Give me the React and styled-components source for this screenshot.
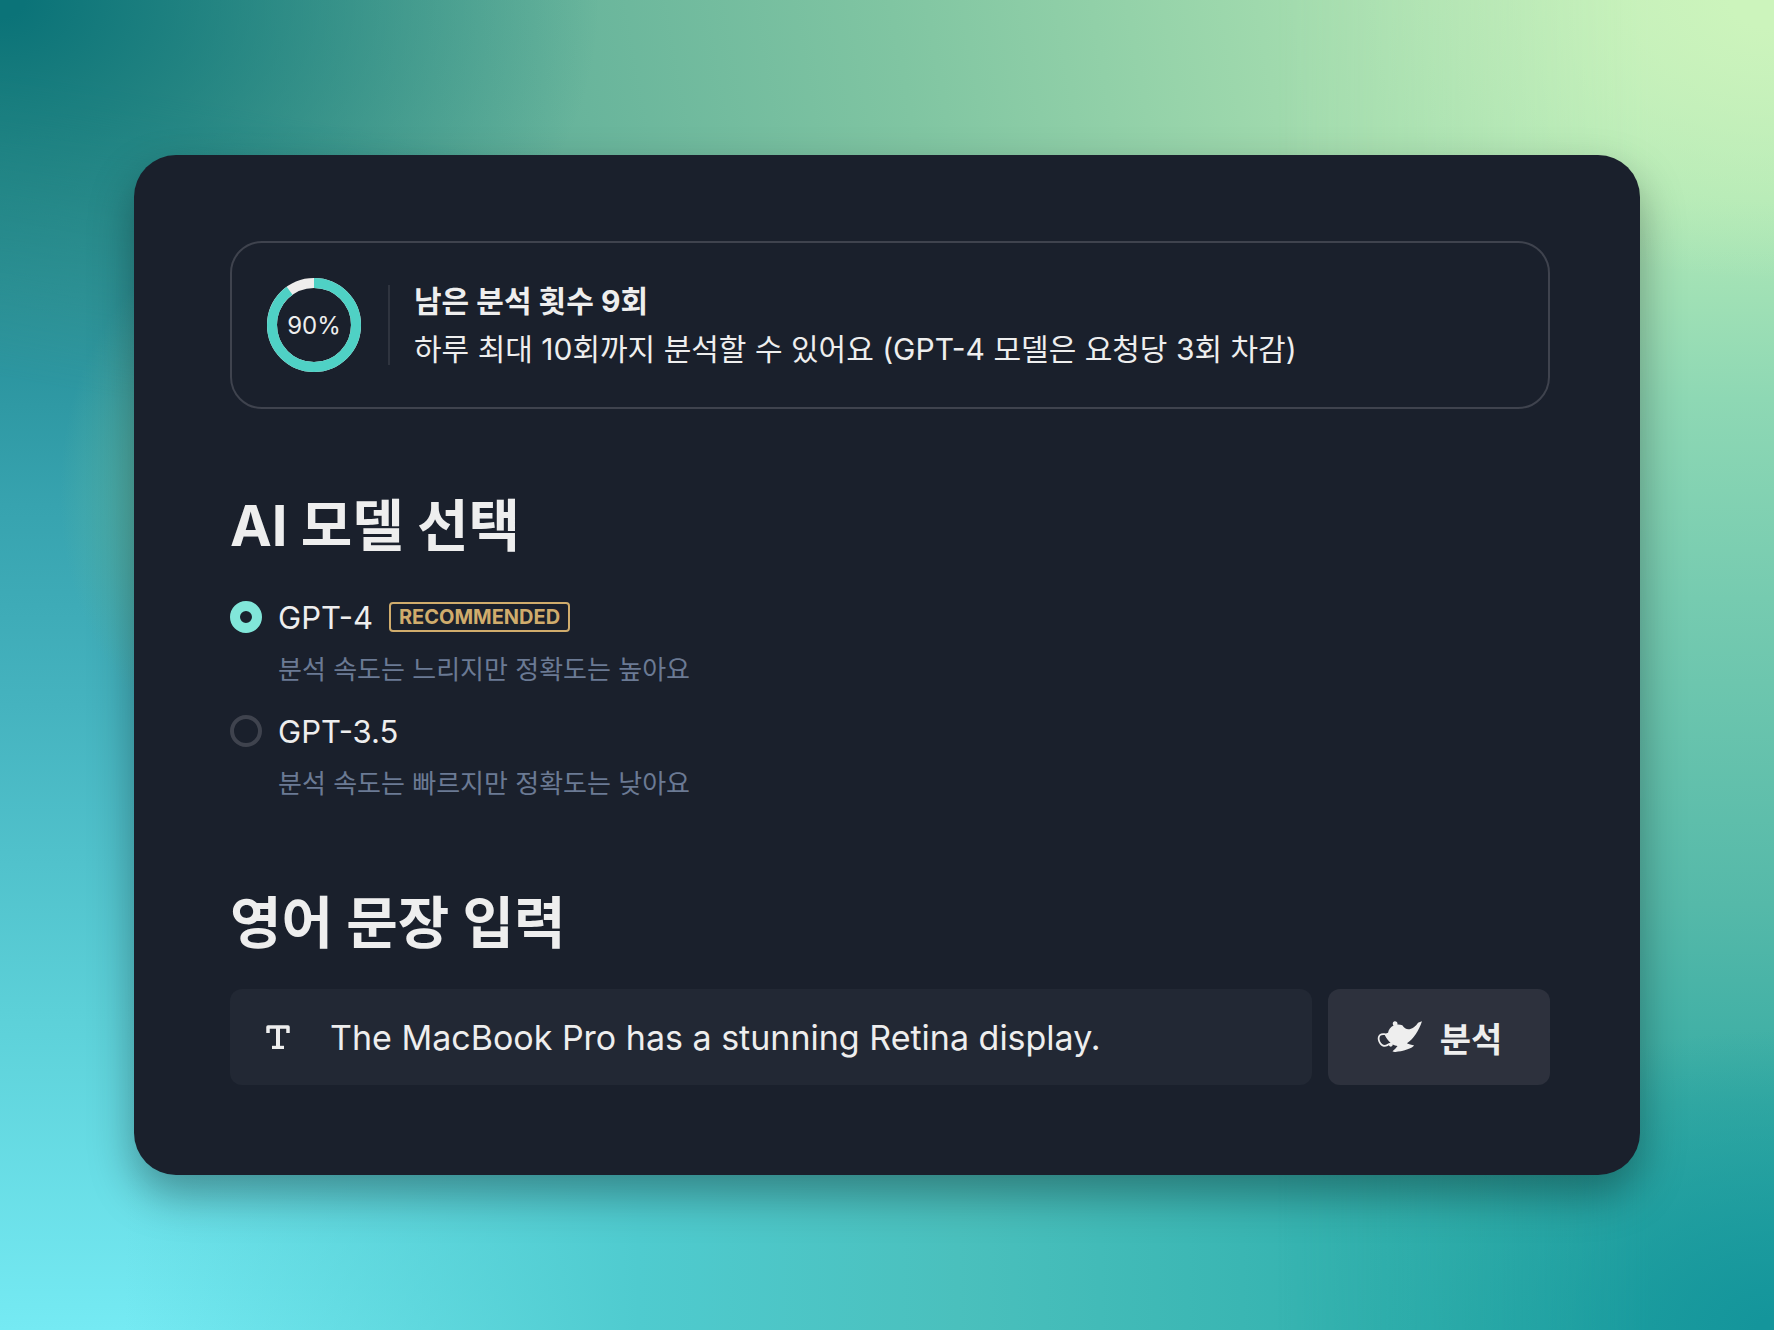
import React, { useState } from 'react'
import styled, { createGlobalStyle } from 'styled-components'
import { GiMagicLamp } from 'react-icons/gi'

const MAX_COUNT = 10

const MODELS = [
  { id: 'gpt-4', name: 'GPT-4', desc: '분석 속도는 느리지만 정확도는 높아요', recommended: true },
  { id: 'gpt-3.5', name: 'GPT-3.5', desc: '분석 속도는 빠르지만 정확도는 낮아요' },
]

function CountRing({ value }) {
  const radius = 42
  const length = 2 * Math.PI * radius

  return (
    <Ring>
      <svg viewBox="0 0 94 94" width="94" height="94" fill="none" strokeWidth="10" aria-hidden="true">
        <circle cx="47" cy="47" r={radius} stroke="#efedec" />
        <circle
          cx="47"
          cy="47"
          r={radius}
          stroke="#4fd1c5"
          strokeDasharray={`${(length * value) / 100} ${length}`}
          transform="rotate(-90 47 47)"
        />
      </svg>
      <RingText>{value}%</RingText>
    </Ring>
  )
}

function TypeIcon() {
  return (
    <svg viewBox="0 0 24 24" width="24" height="24" fill="none" stroke="currentColor" aria-hidden="true">
      <path d="M2 8V2H22V8" strokeWidth="3.5" strokeLinejoin="round" />
      <path d="M12 2V22" strokeWidth="4" />
      <path d="M6 22.4H18" strokeWidth="3.2" />
    </svg>
  )
}

function App() {
  const [model, setModel] = useState('gpt-4')
  const [sentence, setSentence] = useState('The MacBook Pro has a stunning Retina display.')
  const remain = 9

  return (
    <Page>
      <GlobalStyle />
      <Card>
        <CountBox>
          <CountRing value={(remain / MAX_COUNT) * 100} />
          <Divider />
          <div>
            <CountText $bold>남은 분석 횟수 {remain}회</CountText>
            <CountText>하루 최대 {MAX_COUNT}회까지 분석할 수 있어요 (GPT-4 모델은 요청당 3회 차감)</CountText>
          </div>
        </CountBox>

        <section>
          <Title id="model-title">AI 모델 선택</Title>
          <ModelList role="radiogroup" aria-labelledby="model-title">
            {MODELS.map(({ id, name, desc, recommended }) => (
              <div key={id}>
                <ModelLabel>
                  <Radio
                    name="model"
                    value={id}
                    checked={model === id}
                    onChange={() => setModel(id)}
                    aria-describedby={`${id}-desc`}
                  />
                  {name}
                  {recommended && <Badge>RECOMMENDED</Badge>}
                </ModelLabel>
                <ModelDesc id={`${id}-desc`}>{desc}</ModelDesc>
              </div>
            ))}
          </ModelList>
        </section>

        <section>
          <Title as="label" htmlFor="sentence">영어 문장 입력</Title>
          <Form onSubmit={(e) => e.preventDefault()}>
            <InputBox>
              <TypeIcon />
              <Input id="sentence" value={sentence} onChange={(e) => setSentence(e.target.value)} />
            </InputBox>
            <SubmitButton type="submit">
              <GiMagicLamp size={48} aria-hidden="true" />
              분석
            </SubmitButton>
          </Form>
        </section>
      </Card>
    </Page>
  )
}

const GlobalStyle = createGlobalStyle`
  * {
    box-sizing: border-box;
  }
  body {
    margin: 0;
    color: #eeeeee;
    font-family: Inter, "Noto Sans CJK KR", sans-serif;
  }
`

// the left edge runs teal to cyan, the right edge lime to teal,
// the two pseudo elements blend the top and the right side over it
const Page = styled.main`
  position: relative;
  isolation: isolate;
  display: flex;
  align-items: center;
  min-height: 100vh;
  padding: 80px 134px;
  background:
    radial-gradient(ellipse 190px 260px at 250px 37%, #5cb3a0 40%, transparent 100%),
    linear-gradient(90deg, transparent 7%, #4fcbcf 36%, #4ac0bd 54%, #32b1ae 78%, #27a8a6) bottom / 100% 40% no-repeat,
    linear-gradient(#0b7378, #278f99 23%, #37a3af 38%, #45b3bf 53%, #5cd0d8 76%, #75eaf3);

  &::before,
  &::after {
    content: '';
    position: absolute;
    inset: 0;
    z-index: -1;
  }
  &::before {
    background:
      radial-gradient(ellipse 600px 440px at 0 0, #0b7378 4%, transparent),
      linear-gradient(80deg, #52a695 20%, #66b39b 38%, #80c5a2 56%, #a2dbae 76%, #bfecb8);
    mask-image: linear-gradient(190deg, #000 23%, transparent 42%);
  }
  &::after {
    background:
      radial-gradient(ellipse 420px 280px at 100% 0, #ccf4bc 10%, transparent),
      radial-gradient(ellipse 420px 300px at 100% 100%, #14959b 4%, transparent),
      linear-gradient(#bdeab9, #b0e8b6 15%, #8ed8b4 30%, #76cbb0 45%, #55b9a9 68%, #38aca4 83%, #27a8a6);
    mask-image: linear-gradient(90deg, transparent 72%, #000 93%);
  }
`

const Card = styled.div`
  display: flex;
  flex: 1;
  flex-direction: column;
  gap: 81px;
  min-width: 0;
  padding: 86px 90px 90px 96px;
  border-radius: 42px;
  background: #1a202c;
  box-shadow: 0 20px 44px rgba(0, 0, 0, .34);
`

const CountBox = styled.section`
  display: flex;
  align-items: center;
  min-height: 168px;
  padding: 30px 35px;
  border: 2px solid #3f434e;
  border-radius: 32px;
`

const Ring = styled.div`
  display: grid;
  flex: none;
  place-items: center;

  > * {
    grid-area: 1 / 1;
  }
`

const RingText = styled.span`
  font-size: 24px;
`

const Divider = styled.div`
  flex: none;
  width: 2px;
  height: 80px;
  margin: 0 24px 0 27px;
  background: #2f343f;
`

const CountText = styled.p`
  margin: 0;
  font-size: 30px;
  font-weight: ${({ $bold }) => ($bold ? 700 : 400)};
  line-height: 48px;
`

const Title = styled.h2`
  display: block;
  margin: 0 0 30px;
  font-size: 56px;
  font-weight: 700;
  line-height: 72px;
`

const ModelList = styled.div`
  display: grid;
  gap: 20px;
  padding: 3px 0;
`

const ModelLabel = styled.label`
  display: flex;
  align-items: center;
  height: 44px;
  font-size: 31px;
`

const Radio = styled.input.attrs({ type: 'radio' })`
  flex: none;
  width: 32px;
  height: 32px;
  margin: 0 16px 0 0;
  appearance: none;
  border: 4px solid #3f434e;
  border-radius: 50%;

  &:checked {
    border: 10px solid #81e6d9;
  }
`

const Badge = styled.span`
  margin-left: 16px;
  padding: 0 8px;
  border: 2px solid #d0ac6c;
  border-radius: 4px;
  color: #d0ac6c;
  font-size: 20px;
  font-weight: 700;
  line-height: 26px;
`

const ModelDesc = styled.p`
  margin: 12px 0 0 48px;
  color: #6b7a94;
  font-size: 26px;
  line-height: 38px;
`

const Form = styled.form`
  display: flex;
  gap: 16px;
`

const InputBox = styled.div`
  display: flex;
  flex: 1;
  align-items: center;
  gap: 40px;
  min-width: 0;
  height: 96px;
  padding: 0 36px;
  border-radius: 12px;
  background: #222834;
`

const Input = styled.input`
  flex: 1;
  min-width: 0;
  padding: 0;
  border: 0;
  outline: none;
  background: none;
  color: inherit;
  font: inherit;
  font-size: 34px;
`

const SubmitButton = styled.button`
  display: flex;
  align-items: center;
  justify-content: center;
  gap: 16px;
  width: 222px;
  border: 0;
  border-radius: 12px;
  background: #2d313d;
  color: inherit;
  font: inherit;
  font-size: 34px;
  font-weight: 600;
`

export default App
